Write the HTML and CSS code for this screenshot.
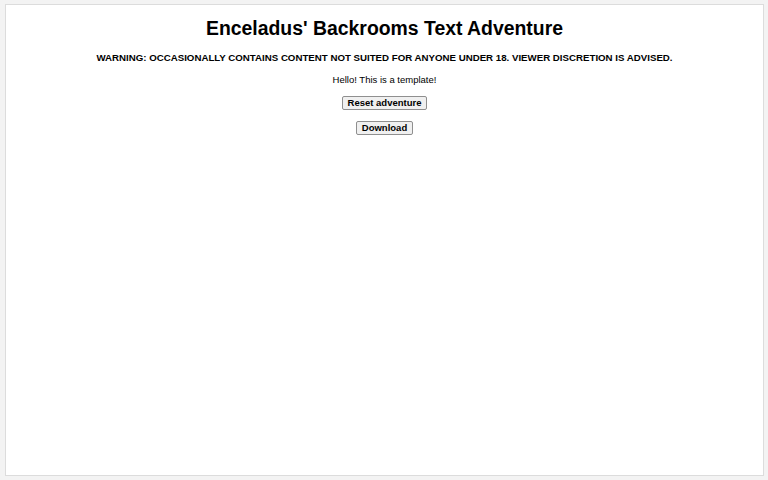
FILE: index.html
```html
<!DOCTYPE html>
<html>

<head>
    <meta charset="UTF-8">
    <meta name="viewport" content="width=device-width, initial-scale=1.0">
    <link rel="stylesheet" href="styles.css">
    <title>Enceladus' Backrooms Text Adventure</title>
</head>

<body>
    <div id="container">
        <h1>Enceladus' Backrooms Text Adventure</h1>
        <p class="warning">WARNING: OCCASIONALLY CONTAINS CONTENT NOT SUITED FOR ANYONE UNDER 18. VIEWER DISCRETION IS ADVISED.</p>
        <p id="story">Hello! This is a template!</p>
        <div class="actions">
            <button class="button">Reset adventure</button>
            <button class="button">Download</button>
        </div>
    </div>
</body>

</html>
```

FILE: styles.css
```css
html,
body {
    height: 100%;
    margin: 0;
    padding: 0;
}

body {
    background-color: #f3f3f3;
    font-family: "Liberation Sans", Arial, sans-serif;
    padding: 4px 4px 4px 5px;
    box-sizing: border-box;
}

#container {
    display: flex;
    flex-direction: column;
    align-items: center;
    height: 100%;
    box-sizing: border-box;
    background-color: #fff;
    border: 1px solid #dcdcdc;
    padding-top: 12px;
}

h1 {
    margin: 0;
    font-size: 19.4px;
    line-height: 23px;
}

.warning {
    margin: 12px 0 0;
    font-size: 9.7px;
    font-weight: bold;
}

#story {
    margin: 11px 0 0;
    font-size: 9.5px;
}

.actions {
    display: flex;
    flex-direction: column;
    align-items: center;
    gap: 11px;
    margin-top: 11px;
}

.button {
    font-family: "Liberation Sans", Arial, sans-serif;
    font-size: 9.5px;
    font-weight: bold;
    color: #000;
    background-color: #f0f0f0;
    border: 1px solid #8f8f8f;
    border-radius: 2px;
    padding: 1px 5px;
    line-height: 10px;
    cursor: pointer;
}

.button:hover {
    background-color: #e5e5e5;
}
```
